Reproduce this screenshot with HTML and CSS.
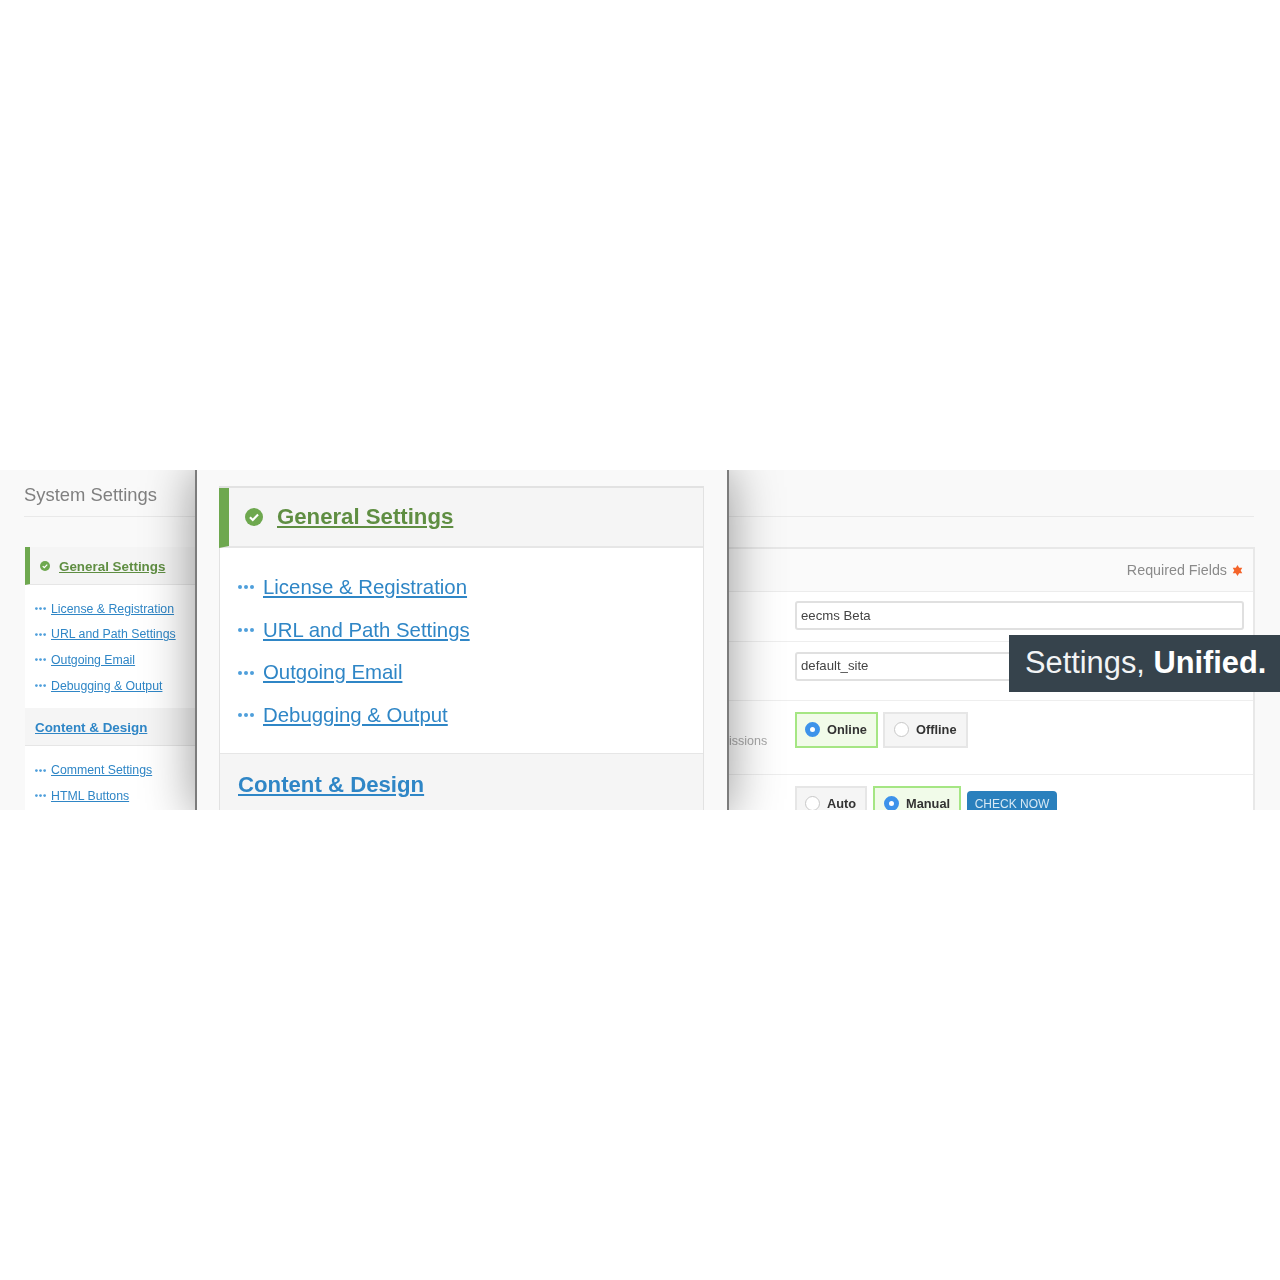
FILE: index.html
```html
<!DOCTYPE html>
<html lang="en">
<head>
<meta charset="utf-8">
<title>Settings, Unified.</title>
<link rel="stylesheet" href="styles.css">
</head>
<body>
<section class="banner">
  <div class="side">
    <h1 class="page-title">System Settings</h1>
    <nav class="nav nav-small">
      <div class="nav-head nav-active">
        <svg class="check" viewBox="0 0 20 20"><circle cx="10" cy="10" r="10" fill="#6ea84f"/><path d="M5.5 10.3l3.1 3 5.9-6" fill="none" stroke="#fff" stroke-width="2.6"/></svg>
        <a href="#">General Settings</a>
      </div>
      <ul class="links">
        <li><svg class="dots" viewBox="0 0 16 4"><circle cx="2" cy="2" r="2"/><circle cx="8" cy="2" r="2"/><circle cx="14" cy="2" r="2"/></svg><a href="#">License &amp; Registration</a></li>
        <li><svg class="dots" viewBox="0 0 16 4"><circle cx="2" cy="2" r="2"/><circle cx="8" cy="2" r="2"/><circle cx="14" cy="2" r="2"/></svg><a href="#">URL and Path Settings</a></li>
        <li><svg class="dots" viewBox="0 0 16 4"><circle cx="2" cy="2" r="2"/><circle cx="8" cy="2" r="2"/><circle cx="14" cy="2" r="2"/></svg><a href="#">Outgoing Email</a></li>
        <li><svg class="dots" viewBox="0 0 16 4"><circle cx="2" cy="2" r="2"/><circle cx="8" cy="2" r="2"/><circle cx="14" cy="2" r="2"/></svg><a href="#">Debugging &amp; Output</a></li>
      </ul>
      <div class="nav-head"><a href="#">Content &amp; Design</a></div>
      <ul class="links">
        <li><svg class="dots" viewBox="0 0 16 4"><circle cx="2" cy="2" r="2"/><circle cx="8" cy="2" r="2"/><circle cx="14" cy="2" r="2"/></svg><a href="#">Comment Settings</a></li>
        <li><svg class="dots" viewBox="0 0 16 4"><circle cx="2" cy="2" r="2"/><circle cx="8" cy="2" r="2"/><circle cx="14" cy="2" r="2"/></svg><a href="#">HTML Buttons</a></li>
      </ul>
    </nav>
  </div>

  <div class="focus">
    <nav class="nav nav-large">
      <div class="nav-head nav-active">
        <svg class="check" viewBox="0 0 20 20"><circle cx="10" cy="10" r="10" fill="#6ea84f"/><path d="M5.5 10.3l3.1 3 5.9-6" fill="none" stroke="#fff" stroke-width="2.4"/></svg>
        <a href="#">General Settings</a>
      </div>
      <ul class="links">
        <li><svg class="dots" viewBox="0 0 16 4"><circle cx="2" cy="2" r="2"/><circle cx="8" cy="2" r="2"/><circle cx="14" cy="2" r="2"/></svg><a href="#">License &amp; Registration</a></li>
        <li><svg class="dots" viewBox="0 0 16 4"><circle cx="2" cy="2" r="2"/><circle cx="8" cy="2" r="2"/><circle cx="14" cy="2" r="2"/></svg><a href="#">URL and Path Settings</a></li>
        <li><svg class="dots" viewBox="0 0 16 4"><circle cx="2" cy="2" r="2"/><circle cx="8" cy="2" r="2"/><circle cx="14" cy="2" r="2"/></svg><a href="#">Outgoing Email</a></li>
        <li><svg class="dots" viewBox="0 0 16 4"><circle cx="2" cy="2" r="2"/><circle cx="8" cy="2" r="2"/><circle cx="14" cy="2" r="2"/></svg><a href="#">Debugging &amp; Output</a></li>
      </ul>
      <div class="nav-head"><a href="#">Content &amp; Design</a></div>
    </nav>
  </div>

  <div class="main">
    <div class="main-title"></div>
    <div class="form">
      <div class="form-head">
        <span>Required Fields</span>
        <svg class="star" viewBox="0 0 12 12"><path d="M6 0L7.800 3h3.400L9.500 6l1.700 3H7.800L6 12 4.200 9H.8l1.700-3L.8 3h3.400z" fill="#f4642a"/></svg>
      </div>
      <div class="row row-one"><div class="field">eecms Beta</div></div>
      <div class="row row-two"><div class="field">default_site</div></div>
      <div class="row row-three">
        <span class="label">issions</span>
        <div class="option option-on opt-online"><i class="radio radio-on"></i>Online</div>
        <div class="option opt-offline"><i class="radio"></i>Offline</div>
      </div>
      <div class="row row-four">
        <div class="option opt-auto"><i class="radio"></i>Auto</div>
        <div class="option option-on opt-manual"><i class="radio radio-on"></i>Manual</div>
        <div class="check-now">CHECK NOW</div>
      </div>
    </div>
  </div>

  <p class="tagline">Settings, <b>Unified.</b></p>
</section>
</body>
</html>
```
FILE: styles.css
```css
* { box-sizing: border-box; }
html, body { margin: 0; padding: 0; background: #fff; }
body { font-family: "Liberation Sans", Arial, sans-serif; }
.banner {
  position: relative;
  margin-top: 470px;
  height: 340px;
  overflow: hidden;
  display: grid;
  grid-template-columns: 195px 534px 551px;
  background: #f9f9f9;
}
.side { padding: 14px 0 0 24px; overflow: hidden; filter: blur(.6px); }
.page-title {
  margin: 0;
  padding-bottom: 10px;
  border-bottom: 1px solid #e9e9e9;
  font-size: 18.400px;
  line-height: 22px;
  font-weight: 400;
  color: #808080;
  white-space: nowrap;
}
.nav { background: #fff; border: 1px solid #e4e4e4; border-bottom: 0; }
.nav a { color: #2f86c6; }
.nav-head {
  display: flex;
  align-items: center;
  background: #f5f5f5;
  border-bottom: 1px solid #e6e6e6;
  font-weight: 700;
  white-space: nowrap;
}
.nav-active a { color: #5f8e42; }
.links { list-style: none; margin: 0; padding: 0; }
.links li { display: flex; align-items: center; white-space: nowrap; }
.dots { fill: #4f9fdb; flex: none; }

.nav-small { margin: 30px -30px 0 1px; border-left: 0; border-top: 0; font-size: 13.400px; width: 220px; }
.nav-small .nav-head { height: 38px; padding: 1px 0 0 10px; }
.nav-small .nav-active { padding-left: 10px; border-left: 5px solid #6ea84f; }
.nav-small .check { width: 10px; height: 10px; margin-right: 9px; }
.nav-small .links { padding: 11px 0 10px 10px; font-size: 12.300px; }
.nav-small .links li { height: 25.600px; }
.nav-small .dots { width: 11px; height: 3px; margin-right: 5px; }

.focus {
  position: relative;
  z-index: 1;
  background: #f9f9f9;
  border-left: 2px solid #7c7c7c;
  border-right: 2px solid #7c7c7c;
  box-shadow: 0 0 48px rgba(0, 0, 0, .42);
  padding: 16px 23px 0 22px;
  filter: blur(.5px);
}
.nav-large { border-width: 2px 1px 0; border-color: #e2e2e2; font-size: 22.200px; height: 330px; }
.nav-large .nav-head { height: 64px; padding-left: 18px; }
.nav-large .nav-active { height: 60px; padding-left: 16px; border-bottom-width: 2px; border-left: 10px solid #6ea84f; margin-left: -1px; }
.nav-large .check { width: 18px; height: 18px; margin-right: 14px; }
.nav-large .links { padding: 18px 0 16px 18px; border-bottom: 1px solid #e6e6e6; }
.nav-large .links li { height: 42.700px; font-size: 20.400px; font-weight: 400; }
.nav-large .dots { width: 16px; height: 4px; margin-right: 9px; }

.main { overflow: hidden; filter: blur(.6px); }
.main-title { height: 47px; margin-right: 26px; border-bottom: 1px solid #e9e9e9; }
.form {
  margin: 30px 25px 0 0;
  background: #fff;
  border-top: 2px solid #e8e8e8;
  border-right: 2px solid #e8e8e8;
  font-size: 13px;
  color: #333;
}
.form-head {
  display: flex;
  justify-content: flex-end;
  align-items: center;
  height: 43px;
  padding-right: 10px;
  background: #fafafa;
  border-bottom: 1px solid #ececec;
  font-size: 14.300px;
  color: #8a8a8a;
}
.star { width: 11px; height: 11px; margin-left: 5px; }
.row { display: flex; align-items: flex-start; padding-left: 66px; border-bottom: 1px solid #eee; }
.row-one { height: 50px; padding-top: 9px; padding-right: 9px; }
.row-two { height: 59px; padding-top: 10px; padding-right: 9px; }
.row-three { height: 74px; padding-top: 11px; gap: 5px; }
.row-four { height: 60px; padding-top: 11px; gap: 6px; border-bottom: 0; }
.field {
  flex: 1;
  height: 29px;
  padding-left: 4px;
  border: 2px solid #e0e0e0;
  border-radius: 3px;
  background: #fff;
  font-size: 13.200px;
  line-height: 24px;
  color: #444;
}
.row-one .field { line-height: 26px; }
.label {
  width: 0;
  margin: 0 61px 0 -66px;
  padding-top: 22px;
  font-size: 12.500px;
  color: #a8a8a8;
  white-space: nowrap;
}
.option {
  display: flex;
  align-items: center;
  height: 36px;
  padding-bottom: 1px;
  background: #f5f5f5;
  border: 2px solid #e6e6e6;
  font-weight: 700;
  font-size: 12.800px;
  color: #333;
  white-space: nowrap;
}
.opt-online { width: 83px; padding-left: 8px; }
.opt-offline { width: 85px; padding-left: 9px; }
.opt-auto { width: 72px; padding-left: 8px; }
.opt-manual { width: 88px; padding-left: 9px; }
.option-on { background: #f1fbe9; border-color: #a5e683; }
.radio {
  flex: none;
  width: 15px;
  height: 15px;
  margin-right: 7px;
  border-radius: 50%;
  background: #fff;
  border: 1px solid #c8c8c8;
}
.radio-on { background: #fff; border: 5px solid #3d93ea; }
.check-now {
  width: 90px;
  height: 30px;
  margin-top: 5px;
  background: #2a80bd;
  border-radius: 4px 4px 0 0;
  color: #d7e8f4;
  font-size: 12px;
  line-height: 26px;
  text-align: center;
}
.tagline {
  position: absolute;
  z-index: 2;
  top: 165px;
  right: 0;
  margin: 0;
  width: 271px;
  height: 57px;
  padding-left: 16px;
  background: #36434c;
  color: #f2f4f5;
  font-size: 30.800px;
  line-height: 55px;
  white-space: nowrap;
}
.tagline b { color: #fff; }
```
